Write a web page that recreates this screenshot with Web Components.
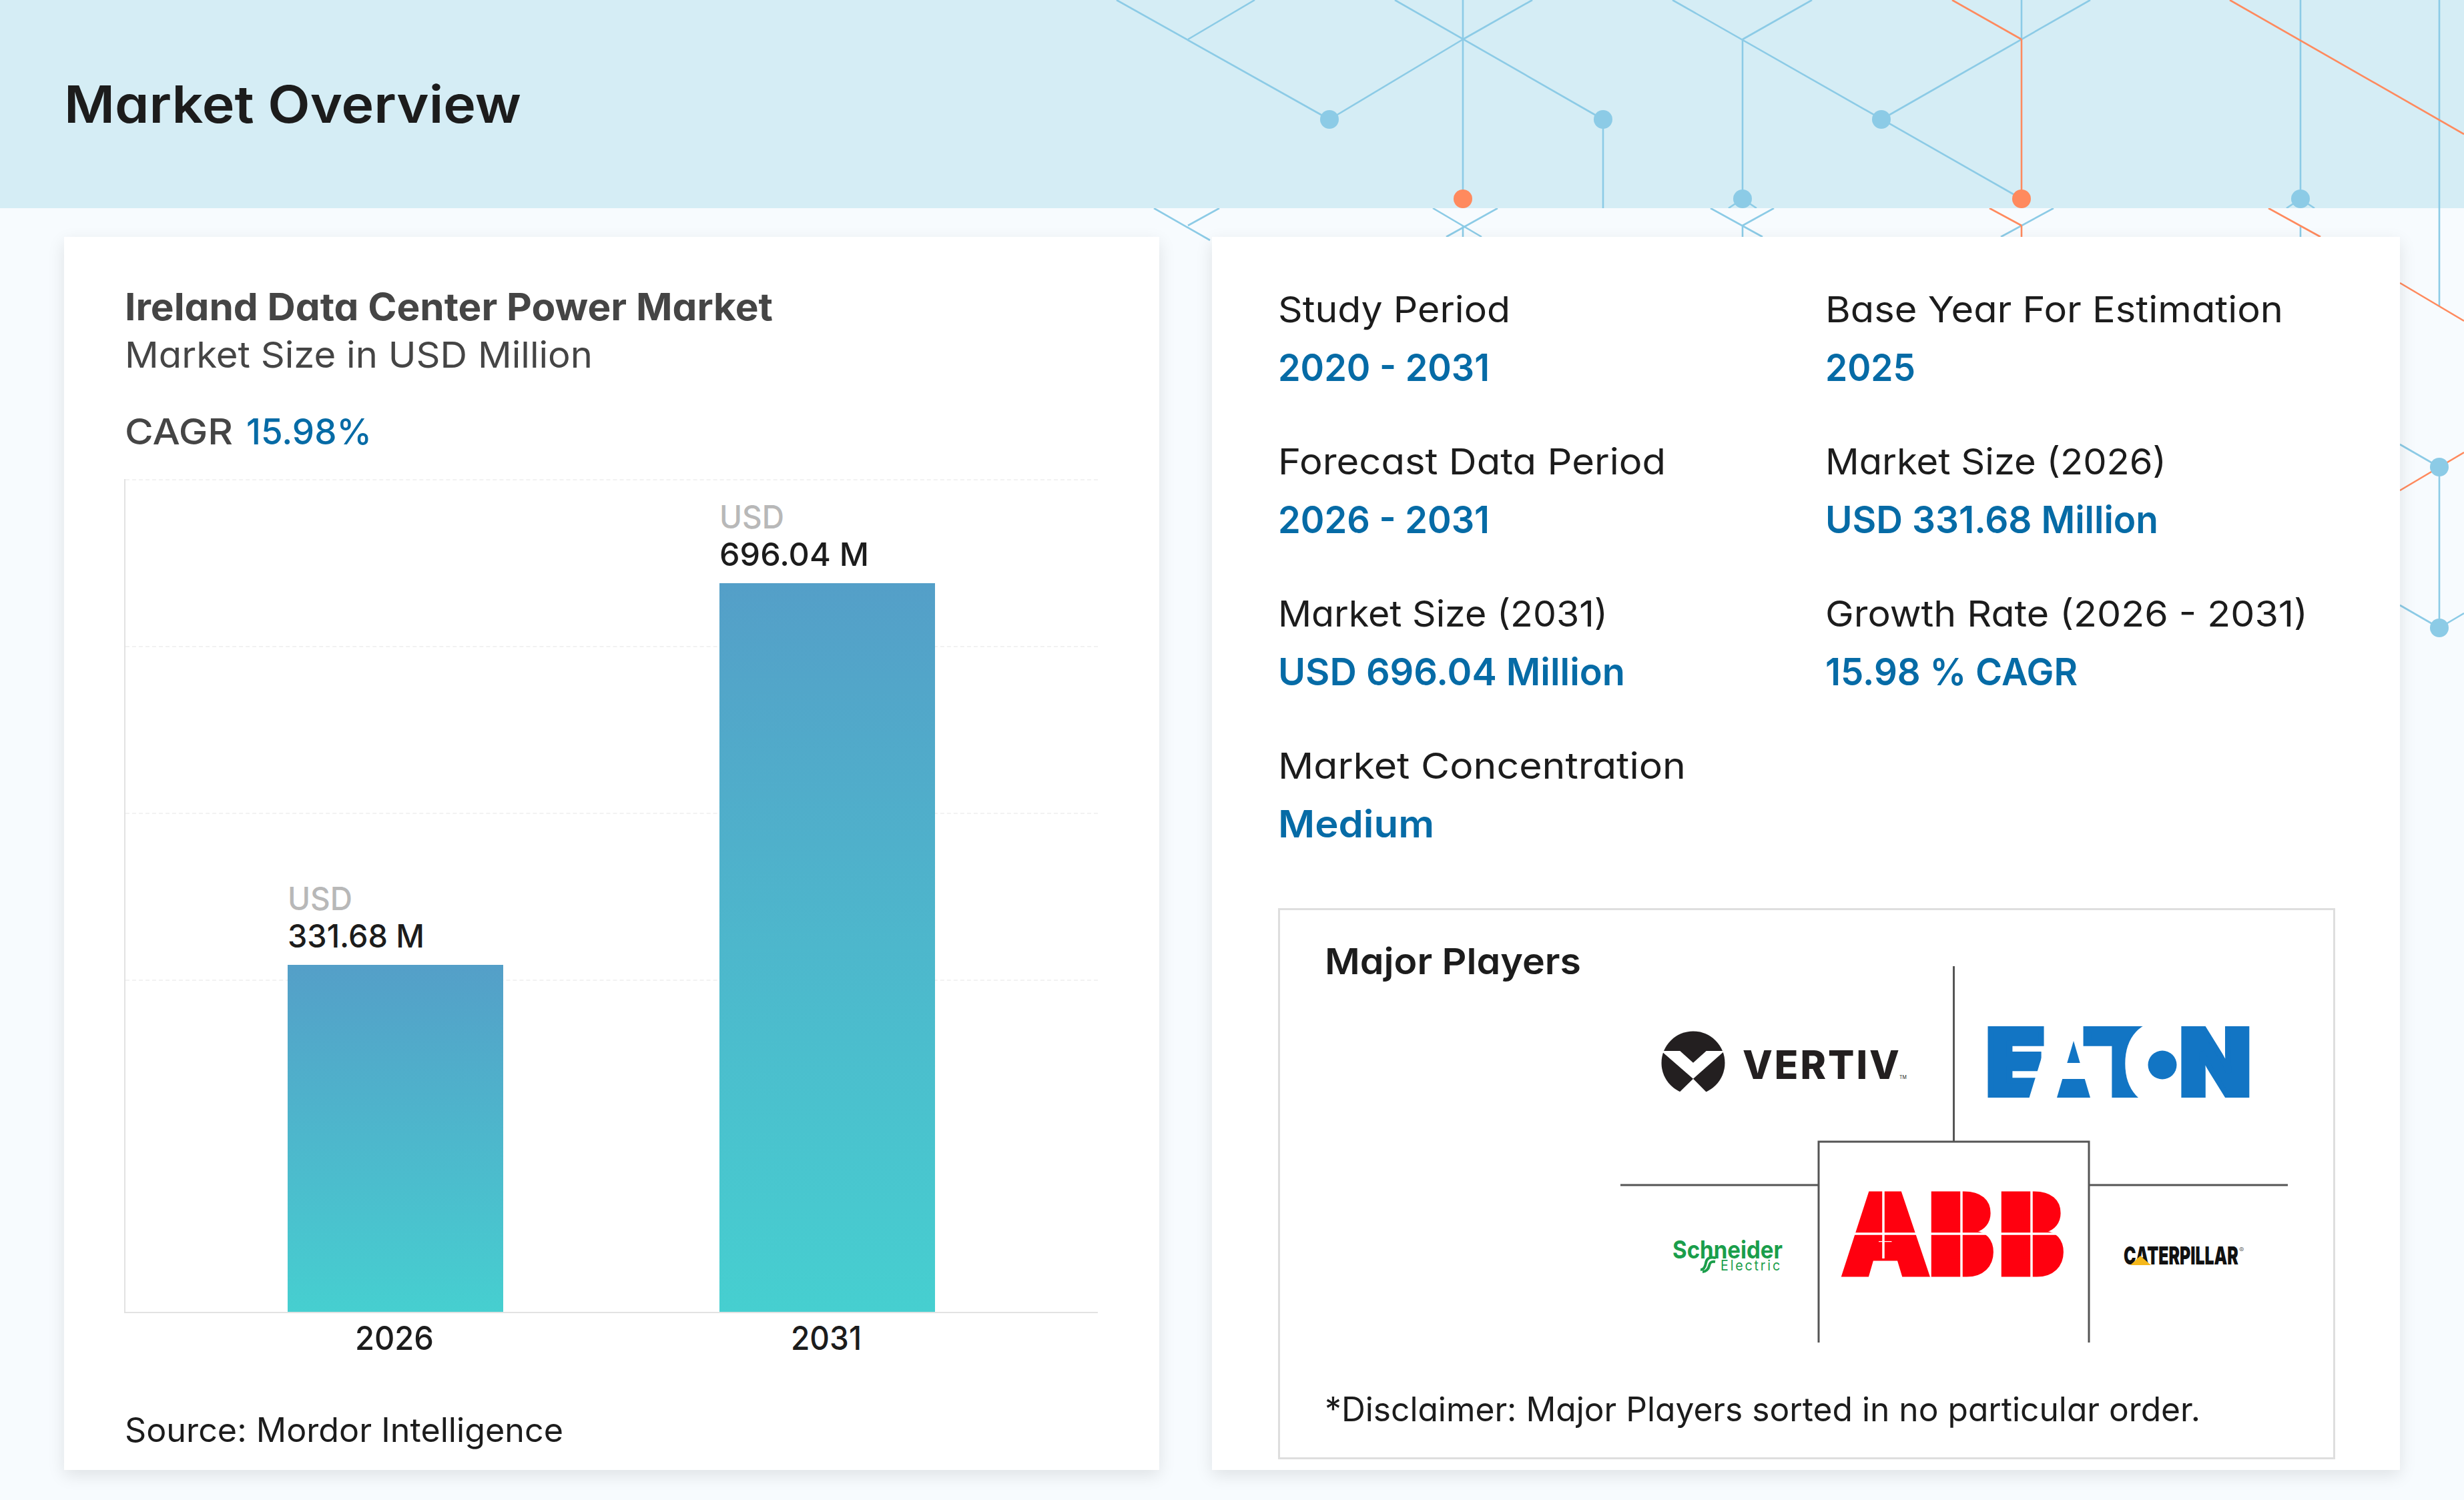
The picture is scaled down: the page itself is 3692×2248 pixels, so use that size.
<!doctype html>
<html lang="en">
<head>
<meta charset="UTF-8">
<title>Market Overview</title>
<style>
  html, body { margin: 0; background: #f7fbfe; }
  body { width: 3692px; height: 2248px; overflow: hidden; font-family: Inter, "Liberation Sans", sans-serif; font-feature-settings: "cv11"; color: #1c1c1c; }
</style>
</head>
<body>
<overview-header><fit-text w="685">Market Overview</fit-text></overview-header>
<overview-main>
  <chart-card slot="left">
    <fit-text slot="title" w="971">Ireland Data Center Power Market</fit-text>
    <fit-text slot="sub" w="701">Market Size in USD Million</fit-text>
    <fit-text slot="cagr" w="162">CAGR</fit-text>
    <fit-text slot="rate" w="188">15.98%</fit-text>
    <bar-chart slot="chart">
      <chart-bar year="2026" year-w="118" value="331.68 M" value-w="205" tall="520"></chart-bar>
      <chart-bar year="2031" year-w="106" value="696.04 M" value-w="224" tall="1092"></chart-bar>
    </bar-chart>
    <fit-text slot="source" w="657">Source: Mordor Intelligence</fit-text>
  </chart-card>
  <facts-card slot="right">
    <fact-item label="Study Period" label-w="348" value="2020 - 2031" value-w="317"></fact-item>
    <fact-item label="Base Year For Estimation" label-w="686" value="2025" value-w="135"></fact-item>
    <fact-item label="Forecast Data Period" label-w="581" value="2026 - 2031" value-w="317"></fact-item>
    <fact-item label="Market Size (2026)" label-w="511" value="USD 331.68 Million" value-w="499"></fact-item>
    <fact-item label="Market Size (2031)" label-w="494" value="USD 696.04 Million" value-w="520"></fact-item>
    <fact-item label="Growth Rate (2026 - 2031)" label-w="723" value="15.98 % CAGR" value-w="378"></fact-item>
    <fact-item label="Market Concentration" label-w="611" value="Medium" value-w="234"></fact-item>
    <players-box slot="players"></players-box>
  </facts-card>
</overview-main>

<script>
  const BLUE = '#8ccbe6'
  const ORANGE = '#ff8a5e'

  // [x1, y1, x2, y2] in page pixels
  const line = (c, pts) => pts.map(p =>
    `<line x1="${p[0]}" y1="${p[1]}" x2="${p[2]}" y2="${p[3]}" stroke="${c}" stroke-width="2.6"/>`).join('')
  const dots = (c, pts) => pts.map(p => `<circle cx="${p[0]}" cy="${p[1]}" r="14" fill="${c}"/>`).join('')

  class OverviewHeader extends HTMLElement {
    constructor () {
      super()
      this.attachShadow({mode: 'open'}).innerHTML = `
        <style>
          :host{display:block;position:relative;height:312px;background:#d5edf5;overflow:hidden}
          svg{position:absolute;left:0;top:0}
          h1{position:relative;margin:0;padding:112px 0 0 96px;font-size:77px;line-height:88px;font-weight:600;color:#1c1c1c}
        </style>
        <svg width="3692" height="312" viewBox="0 0 3692 312">
          ${line(BLUE, [
            [1673,0,1992,179],[1780,59,1880,0],[1992,179,2192,59],[2192,59,2296,0],[2090,0,2402,179],
            [2192,0,2192,298],[2402,179,2402,312],[2506,0,3029,298],[2611,59,2715,0],[2611,59,2611,298],
            [2819,179,3132,0],[3029,0,3029,59],[3447,0,3447,298],[3655,0,3655,312],
            [2590,312,2611,298],[2611,298,2632,312],[3426,312,3447,298],[3447,298,3468,312]
          ])}
          ${line(ORANGE, [[2925,0,3029,59],[3029,59,3029,298],[3341,0,3692,201]])}
          ${dots(BLUE, [[1992,179],[2402,179],[2819,179],[2611,298],[3447,298]])}
          ${dots(ORANGE, [[2192,298],[3029,298]])}
        </svg>
        <h1><slot></slot></h1>`
    }
  }
  customElements.define('overview-header', OverviewHeader)

  class OverviewMain extends HTMLElement {
    constructor () {
      super()
      this.attachShadow({mode: 'open'}).innerHTML = `
        <style>
          :host{display:block;position:relative;height:1936px}
          svg{position:absolute;left:0;top:0}
          .cards{position:relative;display:grid;grid-template-columns:1641px 1780px;column-gap:79px;padding:43px 96px 0}
        </style>
        <svg width="3692" height="1936" viewBox="0 312 3692 1936">
          ${line(BLUE, [
            [1729,312,1813,360],[1827,312,1780,338],
            [2147,312,2220,355],[2244,312,2167,355],[2192,338,2192,355],
            [2563,312,2641,355],[2658,312,2611,338],[2611,338,2611,355],
            [3077,312,2998,355],[3447,338,3447,355],[3655,312,3655,459],
            [3596,666,3655,700],[3655,700,3655,941],[3596,907,3655,941],[3655,941,3692,919]
          ])}
          ${line(ORANGE, [
            [2981,312,3029,338],[3029,338,3029,355],[3399,312,3477,355],
            [3596,424,3692,481],[3596,735,3692,678]
          ])}
          ${dots(BLUE, [[3655,700],[3655,941]])}
        </svg>
        <div class="cards"><slot name="left"></slot><slot name="right"></slot></div>`
    }
  }
  customElements.define('overview-main', OverviewMain)

  class ChartCard extends HTMLElement {
    constructor () {
      super()
      this.attachShadow({mode: 'open'}).innerHTML = `
        <style>
          :host{display:block;height:1848px;box-sizing:border-box;padding:70px 92px 0 91px;background:#fff;box-shadow:0 8px 24px rgba(0,0,0,.1)}
          .title{font-size:56px;line-height:70px;font-weight:700;color:#454545}
          .sub{margin-top:2px;font-size:54px;line-height:70px;color:#454545}
          .cagr{margin-top:50px;font-size:54px;line-height:60px;font-weight:500;color:#454545;display:flex;gap:20px}
          .rate{color:#066ba6}
          .chart{margin:41px 0 0 -1px}
          .source{margin-top:80px;font-size:50px;line-height:60px;color:#1c1c1c}
        </style>
        <div class="title"><slot name="title"></slot></div>
        <div class="sub"><slot name="sub"></slot></div>
        <div class="cagr"><slot name="cagr"></slot><span class="rate"><slot name="rate"></slot></span></div>
        <div class="chart"><slot name="chart"></slot></div>
        <div class="source"><slot name="source"></slot></div>`
    }
  }
  customElements.define('chart-card', ChartCard)

  class BarChart extends HTMLElement {
    constructor () {
      super()
      this.attachShadow({mode: 'open'}).innerHTML = `
        <style>
          :host{display:block;width:1459px}
          .plot{position:relative;height:1250px;box-sizing:border-box;border-left:2px solid #e2e2e2;border-bottom:2px solid #e2e2e2;
            display:flex;align-items:flex-end;gap:324px;padding:0 242px 0 243px}
          .grid{position:absolute;left:0;right:0;top:0}
          .grid div{height:248px;border-top:2px dashed #f2f2f2}
          .axis{display:flex;gap:324px;padding:9px 242px 0 243px;font-size:50px;line-height:56px;font-weight:500;color:#1c1c1c}
          .axis span{width:323px;text-align:center}
          ::slotted(chart-bar){position:relative}
        </style>
        <div class="plot">
          <div class="grid"><div></div><div></div><div></div><div></div></div>
          <slot></slot>
        </div>
        <div class="axis"></div>`
    }
    connectedCallback () {
      this.shadowRoot.querySelector('.axis').innerHTML = [...this.children].map(b =>
        `<span><fit-text w="${b.getAttribute('year-w')}">${b.getAttribute('year')}</fit-text></span>`).join('')
    }
  }
  customElements.define('bar-chart', BarChart)

  class ChartBar extends HTMLElement {
    constructor () {
      super()
      this.attachShadow({mode: 'open'})
    }
    connectedCallback () {
      this.shadowRoot.innerHTML = `
        <style>
          :host{display:block;width:323px;font-size:48px;line-height:56px}
          .usd{color:#b8b8b8;font-weight:500}
          .val{color:#1c1c1c;font-weight:500;margin-bottom:15px}
          .bar{background:linear-gradient(#549fc8,#46cfd0)}
        </style>
        <div class="usd"><fit-text w="97">USD</fit-text></div>
        <div class="val"><fit-text w="${this.getAttribute('value-w')}">${this.getAttribute('value')}</fit-text></div>
        <div class="bar" style="height:${this.getAttribute('tall')}px"></div>`
    }
  }
  customElements.define('chart-bar', ChartBar)

  class FactsCard extends HTMLElement {
    constructor () {
      super()
      this.attachShadow({mode: 'open'}).innerHTML = `
        <style>
          :host{display:block;height:1848px;box-sizing:border-box;padding:79px 97px 0 99px;background:#fff;box-shadow:0 8px 24px rgba(0,0,0,.1)}
          .grid{display:grid;grid-template-columns:820px 1fr;row-gap:81px;margin-bottom:96px}
        </style>
        <div class="grid"><slot></slot></div>
        <slot name="players"></slot>`
    }
  }
  customElements.define('facts-card', FactsCard)

  class FactItem extends HTMLElement {
    constructor () {
      super()
      this.attachShadow({mode: 'open'})
    }
    connectedCallback () {
      const a = n => this.getAttribute(n)
      this.shadowRoot.innerHTML = `
        <style>
          :host{display:block}
          div{font-size:54px;line-height:60px}
          .l{color:#1c1c1c;margin-bottom:27px}
          .v{color:#066ba6;font-weight:600;font-size:57px}
        </style>
        <div class="l"><fit-text w="${a('label-w')}">${a('label')}</fit-text></div>
        <div class="v"><fit-text w="${a('value-w')}">${a('value')}</fit-text></div>`
    }
  }
  customElements.define('fact-item', FactItem)

  class PlayersBox extends HTMLElement {
    constructor () {
      super()
      this.attachShadow({mode: 'open'})
    }
    connectedCallback () {
      this.shadowRoot.innerHTML = `
        <style>
          :host{display:block;box-sizing:border-box;height:826px;border:3px solid #dedede;padding:47px 68px 0 67px}
          .top{display:flex;justify-content:space-between;align-items:flex-start}
          h2{margin:0;font-size:54px;line-height:60px;font-weight:600;color:#1c1c1c}
          svg{display:block;margin-top:37px}
          p{margin:70px 0 0;font-size:50px;line-height:60px;color:#1c1c1c}
          text{font-family:Inter,"Liberation Sans",sans-serif}
        </style>
        <div class="top">
          <h2><fit-text w="384">Major Players</fit-text></h2>
          ${PlayersBox.logos()}
        </div>
        <p><fit-text w="1312">*Disclaimer: Major Players sorted in no particular order.</fit-text></p>`
      // small wordmarks: squeeze the real text to the logo's width
      this.shadowRoot.querySelectorAll('text[data-w]').forEach(t => {
        const s = t.dataset.w / t.getComputedTextLength()
        t.setAttribute('transform', `translate(${t.dataset.x} ${t.dataset.y}) scale(${s} 1)`)
      })
    }
    static logos () {
      return `
      <svg width="1000" height="564" viewBox="2428 1448 1000 564">
        <g stroke="#555" stroke-width="3" fill="none">
          <path d="M2927.5 1448V1711M2725 2012V1711H3130V2012M2428 1776H2725M3130 1776H3428"/>
        </g>

        <!-- vertiv -->
        <circle cx="2537" cy="1593" r="47.5" fill="#231f20"/>
        <path fill="#fff" d="M2489 1575H2517.3L2537 1592.7L2556.7 1575H2584L2537 1616.7L2515 1638.3L2510 1646H2564L2558.3 1638.3L2537 1616.7Z"/>
        <text data-x="2611" data-y="1617" data-w="238" font-size="59" font-weight="800" fill="#231f20" letter-spacing="3">VERTIV</text>
        <text x="2846" y="1617" font-size="7" fill="#231f20">TM</text>

        <!-- eaton: real letters, white cuts on top for the logo's negative space -->
        <g font-weight="900" font-size="136" fill="#1275c4" stroke="#1275c4" stroke-width="8" stroke-linejoin="miter">
          <text transform="translate(2976 1641) scale(1.06 1)">E</text>
          <polygon stroke="none" fill="#fff" points="3074,1536 3040,1647 3090,1647 3124,1536"/>
          <polygon stroke="none" points="3107,1560 3082,1645 3132,1645"/>
          <polygon stroke="none" fill="#fff" points="3085,1593 3130,1593 3130,1617 3085,1617"/>
          <text transform="translate(3122 1641) scale(1.45 1)">T</text>
          <text transform="translate(3240 1652) scale(.92 1)" text-anchor="middle" font-size="160" fill="#fff" stroke="#fff">O</text>
          <rect x="3226" y="1530" width="50" height="42" stroke="none" fill="#fff"/>
          <circle cx="3240" cy="1596" r="21.5" stroke="none"/>
          <text transform="translate(3266 1641) scale(1.02 1)">N</text>
        </g>

        <!-- abb: real letters, white hairlines on top -->
        <g font-weight="900" font-size="172" fill="#ff000f" stroke="#ff000f" stroke-width="3">
          <path d="M2805 1860H2840L2822 1805Z M2915 1800H2960V1900H2915Z M3020 1800H3065V1900H3020Z" stroke="none"/>
          <text transform="translate(2757 1912) scale(1 1)">A</text>
          <text transform="translate(2888 1912) scale(.88 1)">B</text>
          <text transform="translate(2993 1912) scale(.88 1)">B</text>
        </g>
        <path stroke="#fff" stroke-width="3.5" d="M2750 1849H3100M2822 1780V1886M2939 1780V1916M3044 1780V1916"/>

        <!-- schneider -->
        <g fill="#1a9e4b">
          <text data-x="2506" data-y="1886" data-w="165" font-size="37" font-weight="700">Schneider</text>
          <text data-x="2578" data-y="1904" data-w="92" font-size="21" letter-spacing="3">Electric</text>
        </g>
        <path fill="none" stroke="#1a9e4b" stroke-width="4" d="M2571 1885C2560 1883 2557 1887 2556 1893C2555 1899 2552 1903 2548 1903M2570 1891C2564 1890 2562 1892 2561 1897C2560 1902 2556 1906 2551 1906"/>

        <!-- caterpillar -->
        <text data-x="3182" data-y="1895" data-w="172" font-size="37" font-weight="900" fill="#111">CATERPILLAR</text>
        <polygon points="3207,1882 3192,1896 3223,1896" fill="#f5b81c"/>
        <text x="3355" y="1877" font-size="11" fill="#777">®</text>
      </svg>`
    }
  }
  customElements.define('players-box', PlayersBox)

  // the text is stretched a little to take the width given in w
  // defined last: by now every parent has its shadow root and the font size is known
  class FitText extends HTMLElement {
    constructor () {
      super()
      this.attachShadow({mode: 'open'}).innerHTML = `
        <style>
          :host{display:inline-block;white-space:nowrap}
          span{display:inline-block;transform-origin:0 50%}
        </style>
        <span><slot></slot></span>`
    }
    connectedCallback () {
      const w = parseFloat(this.getAttribute('w'))
      const span = this.shadowRoot.querySelector('span')
      if (!w) return
      span.style.transform = `scaleX(${w / span.getBoundingClientRect().width})`
      this.style.width = w + 'px'
    }
  }
  customElements.define('fit-text', FitText)
</script>
</body>
</html>
